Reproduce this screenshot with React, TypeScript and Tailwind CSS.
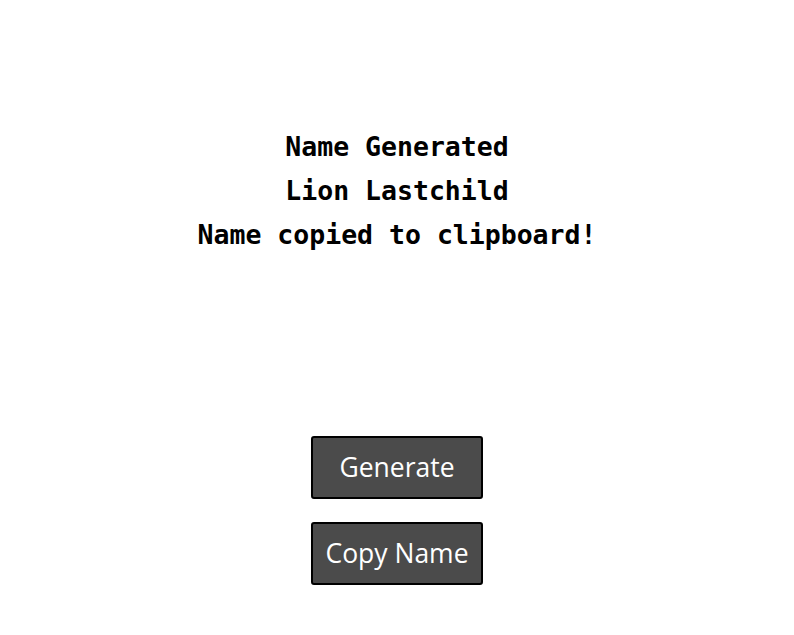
import { useState } from "react";

const firstNames = ["Lion", "Mara", "Tobin", "Ivy", "Corwin"];
const lastNames = ["Lastchild", "Ashdown", "Brightwater", "Kettle", "Moorfield"];

const pick = (list: string[]) => list[Math.floor(Math.random() * list.length)];

const App = () => {
  const [name, setName] = useState("Lion Lastchild");
  const [copied, setCopied] = useState(true);

  const generate = () => {
    setName(`${pick(firstNames)} ${pick(lastNames)}`);
    setCopied(false);
  };

  const copy = () => {
    navigator.clipboard?.writeText(name).catch(() => {});
    setCopied(true);
  };

  return (
    <div className="flex min-h-screen flex-col items-center bg-white">
      <div className="mt-[125px] flex flex-col items-center font-['DejaVu_Sans_Mono',monospace] text-[26.5px] font-bold leading-[44px] text-black">
        <div>Name Generated</div>
        <div>{name}</div>
        <div className={copied ? "" : "invisible"}>Name copied to clipboard!</div>
      </div>

      <div className="mt-[179px] flex flex-col items-center gap-[23px]">
        <button
          onClick={generate}
          className="h-[63px] w-[172px] rounded-[3px] border-2 border-black bg-[#4b4b4b] font-['Open_Sans',sans-serif] text-[26.5px] text-white"
        >
          Generate
        </button>
        <button
          onClick={copy}
          className="h-[63px] w-[172px] rounded-[3px] border-2 border-black bg-[#4b4b4b] font-['Open_Sans',sans-serif] text-[26.5px] text-white"
        >
          Copy Name
        </button>
      </div>
    </div>
  );
};

export default App;
